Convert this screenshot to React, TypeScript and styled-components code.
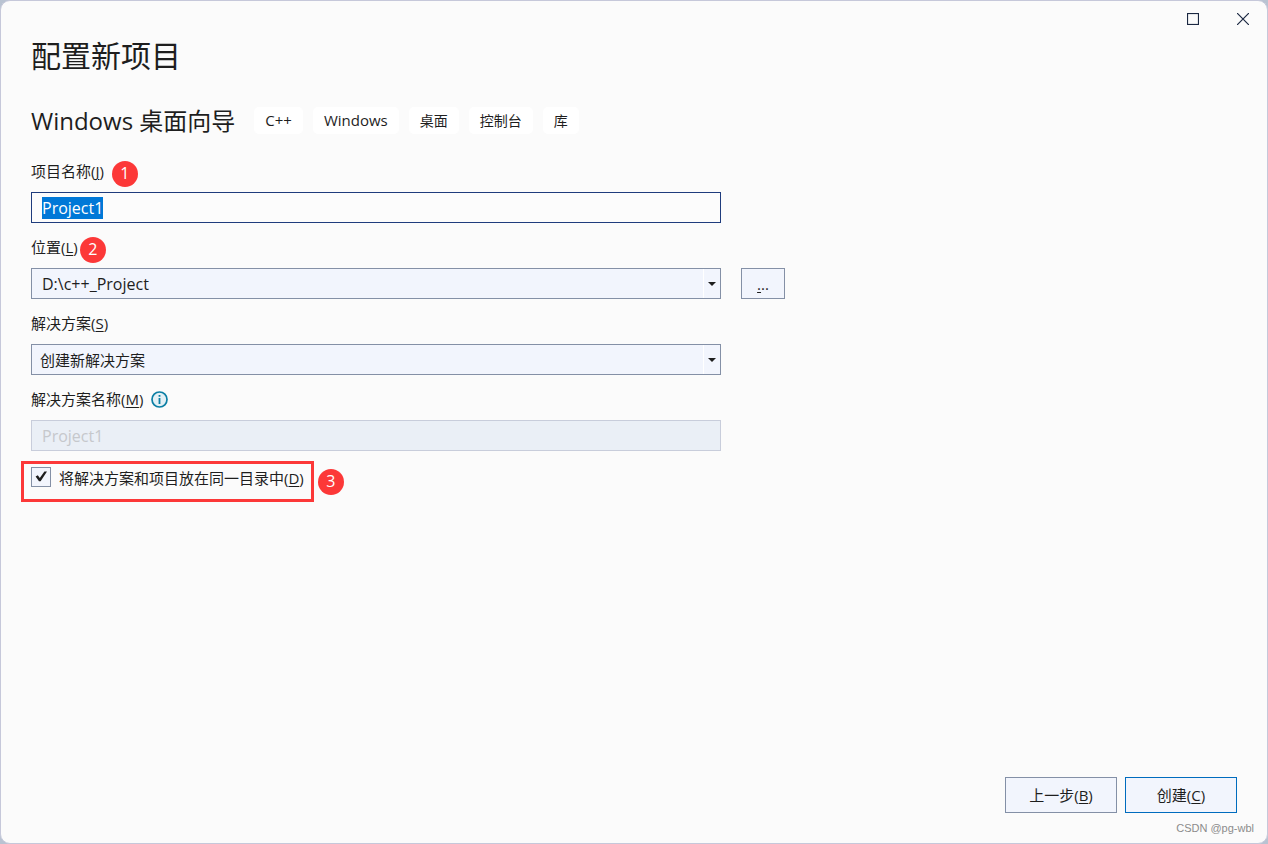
import React, { useEffect, useRef } from "react";
import styled, { createGlobalStyle } from "styled-components";

const GlobalStyle = createGlobalStyle`
  *, *::before, *::after { box-sizing: border-box; }
  body {
    margin: 0;
    background: #b9c3d2;
    color: #1e1e1e;
    font-family: "Open Sans", "Noto Sans CJK SC", sans-serif;
    font-size: 15px;
    line-height: 20px;
  }
  button, input, select { font: inherit; color: inherit; }
  u { text-underline-offset: 2px; text-decoration-thickness: 1px; }
`;

const Dialog = styled.div`
  position: relative;
  display: flex;
  flex-direction: column;
  min-height: 100vh;
  border: 1px solid #c6c8da;
  border-radius: 10px;
  background: #fbfbfb;
`;

const TitleBar = styled.header`
  display: flex;
  justify-content: flex-end;
  gap: 2px;
  height: 36px;
`;

const WindowButton = styled.button`
  display: flex;
  align-items: center;
  justify-content: center;
  width: 48px;
  padding: 0;
  border: 0;
  background: transparent;
  color: #1b2842;
`;

const Content = styled.main`
  flex: 1;
  padding: 0 30px;
`;

const Title = styled.h1`
  margin: 0;
  font-size: 30px;
  line-height: 38px;
  font-weight: 400;
`;

const TemplateRow = styled.div`
  display: flex;
  align-items: center;
  gap: 19px;
  height: 27px;
  margin: 32px 0 27px;
`;

const TemplateName = styled.h2`
  margin: 0;
  font-size: 24px;
  line-height: 27px;
  font-weight: 400;
  white-space: nowrap;
`;

const Tags = styled.ul`
  display: flex;
  gap: 10px;
  margin: 0;
  padding: 0;
  list-style: none;
`;

const Tag = styled.li<{ $latin?: boolean }>`
  padding: 0 11px;
  border-radius: 5px;
  background: #ffffff;
  font-size: ${(p) => (p.$latin ? 15 : 14)}px;
  line-height: 27px;
  white-space: nowrap;
`;

const Form = styled.form`
  display: flex;
  flex-direction: column;
  gap: 14px;
`;

const Field = styled.div`
  display: flex;
  flex-direction: column;
`;

const LabelRow = styled.div<{ $tight?: boolean }>`
  display: flex;
  align-items: flex-start;
  gap: ${(p) => (p.$tight ? 2 : 8)}px;
  height: 31px;
`;

const Badge = styled.span`
  flex: none;
  width: 26px;
  height: 26px;
  border-radius: 50%;
  background: #fc3838;
  color: #ffffff;
  font-size: 16px;
  line-height: 24px;
  text-align: center;
`;

const InfoButton = styled.button`
  display: flex;
  align-items: center;
  height: 20px;
  padding: 0;
  border: 0;
  background: transparent;
`;

const ControlRow = styled.div`
  display: flex;
  gap: 20px;
`;

const TextInput = styled.input`
  width: 100%;
  max-width: 690px;
  height: 31px;
  padding: 0 10px;
  border: 1px solid #1f3c7d;
  border-radius: 0;
  outline: 0;
  background: #fcfcfc;
  font-size: 16px;

  &::selection { background: #0078d7; color: #ffffff; }

  &:disabled {
    border-color: #c8cddb;
    background: #eaeff6;
    color: #c6c8cc;
  }
`;

const SelectBox = styled.div`
  display: grid;
  grid-template-columns: 1fr 17px;
  flex: 1;
  max-width: 690px;
  height: 31px;
  border: 1px solid #8490a6;
  background: #f2f5fd;
`;

const SelectInput = styled.select<{ $latin?: boolean }>`
  grid-area: 1 / 1 / 2 / 3;
  appearance: none;
  width: 100%;
  padding: 0 24px 0 ${(p) => (p.$latin ? 10 : 8)}px;
  border: 0;
  border-radius: 0;
  outline: 0;
  background: transparent;
  font-size: ${(p) => (p.$latin ? 16 : 15)}px;
`;

const SelectArrow = styled.span`
  grid-area: 1 / 2 / 2 / 3;
  display: flex;
  align-items: center;
  justify-content: center;
  border-left: 1px solid #ffffff;
  pointer-events: none;
`;

const Button = styled.button<{ $primary?: boolean; $small?: boolean }>`
  width: ${(p) => (p.$small ? 44 : 112)}px;
  height: ${(p) => (p.$small ? 31 : 36)}px;
  padding: 0;
  border: 1px solid ${(p) => (p.$primary ? "#006cbe" : "#8490a6")};
  border-radius: 0;
  background: #f2f5fd;
`;

const OptionRow = styled.div`
  display: flex;
  align-items: center;
  gap: 4px;
  margin: -4px 0 0 -10px;
`;

const Highlight = styled.div`
  height: 41px;
  padding: 3px 7px;
  border: 3px solid #fc3838;
`;

const CheckLabel = styled.label`
  display: flex;
  align-items: flex-start;
  gap: 8px;
  line-height: 22px;
  white-space: nowrap;
`;

const CheckControl = styled.span`
  display: grid;
  width: 20px;
  height: 20px;
`;

const CheckInput = styled.input`
  grid-area: 1 / 1;
  appearance: none;
  width: 20px;
  height: 20px;
  margin: 0;
  border: 1px solid #8490a6;
  background: #f2f5fd;

  &:not(:checked) + svg { visibility: hidden; }
`;

const CheckMark = styled.svg`
  grid-area: 1 / 1;
  pointer-events: none;
`;

const Footer = styled.footer`
  display: flex;
  justify-content: flex-end;
  gap: 8px;
  padding: 0 30px 30px;
`;

const Watermark = styled.small`
  position: absolute;
  right: 13px;
  bottom: 7px;
  color: #8c8c8c;
  font-family: "Liberation Sans", sans-serif;
  font-size: 11px;
  line-height: 16px;
`;

const Arrow = () => (
  <SelectArrow>
    <svg width="8" height="4" viewBox="0 0 8 4" aria-hidden="true">
      <path d="M0 0h8L4 4z" fill="#1e1e1e" />
    </svg>
  </SelectArrow>
);

export default function App() {
  const nameRef = useRef<HTMLInputElement>(null);

  useEffect(() => {
    nameRef.current?.focus();
    nameRef.current?.select();
  }, []);

  return (
    <>
      <GlobalStyle />
      <Dialog>
        <TitleBar>
          <WindowButton type="button" aria-label="最大化">
            <svg width="12" height="12" viewBox="0 0 12 12" fill="none" stroke="currentColor" strokeWidth="1.2">
              <rect x="0.5" y="0.5" width="11" height="11" />
            </svg>
          </WindowButton>
          <WindowButton type="button" aria-label="关闭">
            <svg width="12" height="12" viewBox="0 0 12 12" fill="none" stroke="currentColor" strokeWidth="1.2">
              <path d="M0 0l12 12M12 0L0 12" />
            </svg>
          </WindowButton>
        </TitleBar>

        <Content>
          <Title>配置新项目</Title>
          <TemplateRow>
            <TemplateName>Windows 桌面向导</TemplateName>
            <Tags>
              <Tag $latin>C++</Tag>
              <Tag $latin>Windows</Tag>
              <Tag>桌面</Tag>
              <Tag>控制台</Tag>
              <Tag>库</Tag>
            </Tags>
          </TemplateRow>

          <Form id="project-form" onSubmit={(e) => e.preventDefault()}>
            <Field>
              <LabelRow>
                <label htmlFor="project-name">项目名称(<u>J</u>)</label>
                <Badge>1</Badge>
              </LabelRow>
              <TextInput id="project-name" ref={nameRef} defaultValue="Project1" spellCheck={false} />
            </Field>

            <Field>
              <LabelRow $tight>
                <label htmlFor="location">位置(<u>L</u>)</label>
                <Badge>2</Badge>
              </LabelRow>
              <ControlRow>
                <SelectBox>
                  <SelectInput id="location" $latin>
                    <option>D:\c++_Project</option>
                  </SelectInput>
                  <Arrow />
                </SelectBox>
                <Button type="button" $small aria-label="浏览"><u>.</u>..</Button>
              </ControlRow>
            </Field>

            <Field>
              <LabelRow>
                <label htmlFor="solution">解决方案(<u>S</u>)</label>
              </LabelRow>
              <ControlRow>
                <SelectBox>
                  <SelectInput id="solution">
                    <option>创建新解决方案</option>
                  </SelectInput>
                  <Arrow />
                </SelectBox>
              </ControlRow>
            </Field>

            <Field>
              <LabelRow>
                <label htmlFor="solution-name">解决方案名称(<u>M</u>)</label>
                <InfoButton type="button" aria-label="信息">
                  <svg width="17" height="17" viewBox="0 0 17 17">
                    <circle cx="8.5" cy="8.5" r="7.5" fill="#e3f0f5" stroke="#0a7ea4" strokeWidth="1.7" />
                    <path d="M7.6 4h1.8v1.8H7.6zM7.6 7h1.8v6H7.6z" fill="#0a7ea4" />
                  </svg>
                </InfoButton>
              </LabelRow>
              <TextInput id="solution-name" value="Project1" disabled readOnly />
            </Field>

            <OptionRow>
              <Highlight>
                <CheckLabel>
                  <CheckControl>
                    <CheckInput type="checkbox" defaultChecked />
                    <CheckMark width="20" height="20" viewBox="0 0 20 20" fill="none">
                      <path d="M4.6 9.4l2.2-1.2 2 2.8 4.6-6.6h2.6L9.6 14.2H8z" fill="#1e1e1e" />
                    </CheckMark>
                  </CheckControl>
                  <span>将解决方案和项目放在同一目录中(<u>D</u>)</span>
                </CheckLabel>
              </Highlight>
              <Badge>3</Badge>
            </OptionRow>
          </Form>
        </Content>

        <Footer>
          <Button type="button">上一步(<u>B</u>)</Button>
          <Button type="submit" form="project-form" $primary>创建(<u>C</u>)</Button>
        </Footer>
        <Watermark>CSDN @pg-wbl</Watermark>
      </Dialog>
    </>
  );
}
